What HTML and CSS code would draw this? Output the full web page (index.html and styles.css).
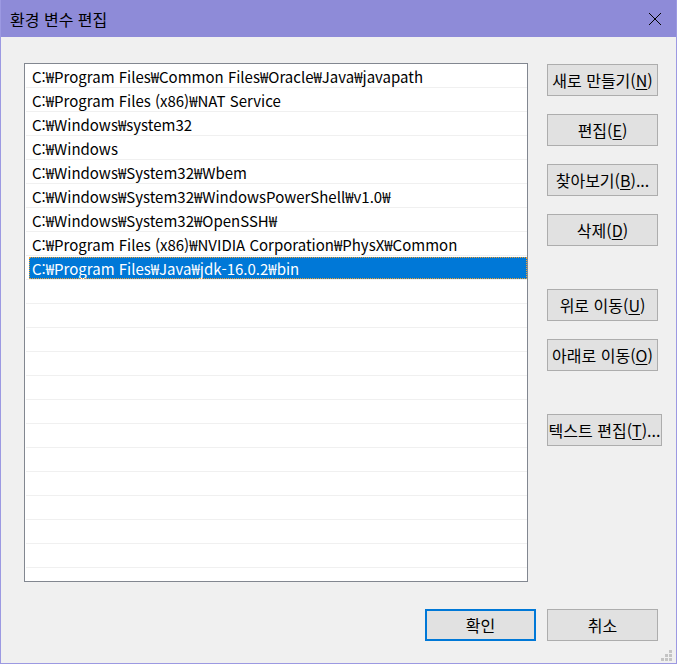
FILE: index.html
```html
<!DOCTYPE html>
<html lang="ko">
<head>
<meta charset="utf-8">
<title>환경 변수 편집</title>
<link rel="stylesheet" href="styles.css">
</head>
<body>
<div class="window">
  <div class="titlebar">
    <span class="title">환경 변수 편집</span>
    <svg class="close" width="14" height="14" viewBox="0 0 14 14"><path d="M1 1 L13 13 M13 1 L1 13" stroke="#000" stroke-width="1" fill="none"/></svg>
  </div>
  <div class="body">
    <div class="main">
      <div class="list">
        <div class="row"><span class="cell">C:₩Program Files₩Common Files₩Oracle₩Java₩javapath</span></div>
        <div class="row"><span class="cell">C:₩Program Files (x86)₩NAT Service</span></div>
        <div class="row"><span class="cell">C:₩Windows₩system32</span></div>
        <div class="row"><span class="cell">C:₩Windows</span></div>
        <div class="row"><span class="cell">C:₩Windows₩System32₩Wbem</span></div>
        <div class="row"><span class="cell">C:₩Windows₩System32₩WindowsPowerShell₩v1.0₩</span></div>
        <div class="row"><span class="cell">C:₩Windows₩System32₩OpenSSH₩</span></div>
        <div class="row"><span class="cell">C:₩Program Files (x86)₩NVIDIA Corporation₩PhysX₩Common</span></div>
        <div class="row"><span class="cell selected">C:₩Program Files₩Java₩jdk-16.0.2₩bin</span></div>
        <div class="row"></div>
        <div class="row"></div>
        <div class="row"></div>
        <div class="row"></div>
        <div class="row"></div>
        <div class="row"></div>
        <div class="row"></div>
        <div class="row"></div>
        <div class="row"></div>
        <div class="row"></div>
        <div class="row"></div>
        <div class="row"></div>
        <div class="row"></div>
      </div>
      <div class="side">
        <button class="btn">새로 만들기(<u>N</u>)</button>
        <button class="btn">편집(<u>E</u>)</button>
        <button class="btn">찾아보기(<u>B</u>)...</button>
        <button class="btn">삭제(<u>D</u>)</button>
        <button class="btn gap">위로 이동(<u>U</u>)</button>
        <button class="btn">아래로 이동(<u>O</u>)</button>
        <button class="btn gap wide">텍스트 편집(<u>T</u>)...</button>
      </div>
    </div>
    <div class="footer">
      <button class="btn default">확인</button>
      <button class="btn">취소</button>
    </div>
  </div>
  <svg class="grip" width="12" height="12" viewBox="0 0 12 12">
    <rect x="8" y="0" width="3" height="3" fill="#c4c4c4"/>
    <rect x="4" y="4" width="3" height="3" fill="#c4c4c4"/>
    <rect x="8" y="4" width="3" height="3" fill="#c4c4c4"/>
    <rect x="0" y="8" width="3" height="3" fill="#c4c4c4"/>
    <rect x="4" y="8" width="3" height="3" fill="#c4c4c4"/>
    <rect x="8" y="8" width="3" height="3" fill="#c4c4c4"/>
  </svg>
</div>
</body>
</html>
```
FILE: styles.css
```css
* { box-sizing: border-box; }
html, body { margin: 0; padding: 0; }
body {
  font-family: "Noto Sans CJK KR", "Noto Sans", sans-serif;
  font-size: 15px;
  color: #000;
  background: #f0f0f0;
}
.window {
  position: relative;
  width: 677px;
  height: 664px;
  background: #f0f0f0;
  border: 1px solid #9c99e2;
  border-top: none;
  display: flex;
  flex-direction: column;
  overflow: hidden;
}
.titlebar {
  height: 37px;
  background: #8e8bd8;
  display: flex;
  align-items: center;
  justify-content: space-between;
  padding: 0 14px 0 9px;
  flex: none;
}
.title {
  font-size: 16px;
  line-height: 20px;
}
.close { display: block; margin-top: 1px; }
.body {
  flex: 1;
  display: flex;
  flex-direction: column;
  padding: 26px 0 0 23px;
}
.main {
  display: flex;
  gap: 19px;
}
.list {
  width: 504px;
  height: 519px;
  background: #fff;
  border: 1px solid #828790;
  overflow: hidden;
  padding-left: 1px;
}
.row {
  height: 24px;
  border-bottom: 1px solid #f0f0f0;
  display: flex;
  align-items: stretch;
}
.cell {
  display: flex;
  align-items: center;
  flex: 1;
  padding: 2px 0 0 6px;
  white-space: nowrap;
  line-height: 20px;
}
.cell.selected {
  margin: 1px 0 0 3px;
  padding: 1px 0 0 3px;
  background: #0078d7;
  color: #fff;
  outline: 1px dotted #f0a030;
  outline-offset: -1px;
}
.side {
  display: flex;
  flex-direction: column;
  align-items: flex-start;
  padding-top: 1px;
  gap: 18px;
}
.btn {
  font-family: "Noto Sans CJK KR", "Noto Sans", sans-serif;
  font-size: 16px;
  color: #000;
  width: 111px;
  height: 32px;
  padding: 0;
  background: #e1e1e1;
  border: 1px solid #adadad;
  border-radius: 0;
  line-height: 20px;
  white-space: nowrap;
}
.btn u { text-underline-offset: 2px; }
.btn.gap { margin-top: 25px; }
.btn.wide { width: 115px; }
.btn.default { border: 2px solid #0078d7; }
.footer {
  display: flex;
  justify-content: flex-end;
  gap: 11px;
  padding-right: 18px;
  margin-top: 27px;
}
.grip {
  position: absolute;
  right: 3px;
  bottom: 1px;
}
```
